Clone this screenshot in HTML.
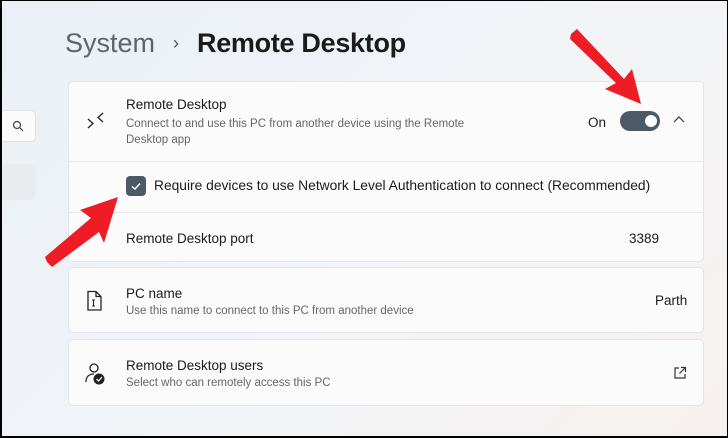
<!DOCTYPE html>
<html><head><style>
*{margin:0;padding:0;box-sizing:border-box}
body{width:728px;height:438px;overflow:hidden;font-family:"Liberation Sans",sans-serif;position:relative;background:linear-gradient(135deg,#eaf0f6 0%,#f2f4f7 55%,#f6f1ee 100%)}
.abs{position:absolute}
.card{position:absolute;left:68px;width:636px;background:#fbfbfc;border:1px solid #e3e5e8;border-radius:5px}
.t{font-size:13.5px;color:#1b1b1b}
.s{font-size:11.5px;color:#666;line-height:16px}
</style></head><body>
<div class="abs" style="left:65px;top:28px;font-size:27px;color:#606368">System</div>
<div class="abs" style="left:173px;top:33px;font-size:18px;color:#555">›</div>
<div class="abs" style="left:197px;top:28px;font-size:27px;color:#1b1b1b;font-weight:bold;letter-spacing:-0.3px">Remote Desktop</div>
<div class="abs" style="left:-4px;top:110px;width:40px;height:32px;background:#fbfbfc;border:1px solid #e0e2e5;border-radius:5px"></div>
<svg class="abs" style="left:12px;top:120px" width="12" height="12"><circle cx="5" cy="5" r="3.5" fill="none" stroke="#444" stroke-width="1.2"/><line x1="7.5" y1="7.5" x2="11" y2="11" stroke="#444" stroke-width="1.2"/></svg>
<div class="abs" style="left:-4px;top:164px;width:40px;height:36px;background:#e9ecef;border-radius:5px"></div>

<div class="card" style="top:81px;height:181px">
  <div style="position:absolute;left:0;right:0;top:79px;border-top:1px solid #e6e8eb"></div>
  <div style="position:absolute;left:0;right:0;top:130px;border-top:1px solid #e6e8eb"></div>
</div>
<svg class="abs" style="left:86px;top:110px" width="20" height="22"><path d="M2 9 L7 13.5 L2 18 M17 3 L12 7.5 L17 12" fill="none" stroke="#222" stroke-width="1.3"/></svg>
<div class="abs t" style="left:126px;top:97px">Remote Desktop</div>
<div class="abs s" style="left:126px;top:116px;width:380px">Connect to and use this PC from another device using the Remote Desktop app</div>
<div class="abs t" style="left:588px;top:115px">On</div>
<div class="abs" style="left:620px;top:111px;width:40px;height:20px;border-radius:10px;background:#4b5a66"></div>
<div class="abs" style="left:645px;top:115px;width:12px;height:12px;border-radius:6px;background:#fff"></div>
<svg class="abs" style="left:673px;top:115px" width="12" height="10"><path d="M1 7 L6 2 L11 7" fill="none" stroke="#333" stroke-width="1.2"/></svg>
<div class="abs" style="left:126px;top:176px;width:20px;height:20px;border-radius:4px;background:#4b5a66"></div>
<svg class="abs" style="left:126px;top:176px" width="20" height="20"><path d="M6 10.5 L9 13 L14 7.5" fill="none" stroke="#fff" stroke-width="1.4"/></svg>
<div class="abs t" style="left:154px;top:178px;font-size:13.8px">Require devices to use Network Level Authentication to connect (Recommended)</div>
<div class="abs t" style="left:126px;top:231px">Remote Desktop port</div>
<div class="abs t" style="left:629px;top:231px">3389</div>

<div class="card" style="top:267px;height:66px"></div>
<svg class="abs" style="left:86px;top:290px" width="18" height="22"><path d="M2 1.5 H10 L15 6.5 V20 H2 Z M10 1.5 V6.5 H15" fill="none" stroke="#222" stroke-width="1.3"/><path d="M6 10 H9 M7.5 10 V16 M6 16 H9" stroke="#222" stroke-width="1.1"/></svg>
<div class="abs t" style="left:126px;top:286px">PC name</div>
<div class="abs s" style="left:126px;top:303px">Use this name to connect to this PC from another device</div>
<div class="abs t" style="left:655px;top:293px">Parth</div>

<div class="card" style="top:339px;height:67px"></div>
<svg class="abs" style="left:84px;top:362px" width="24" height="24"><circle cx="10" cy="6" r="4" fill="none" stroke="#222" stroke-width="1.3"/><path d="M2 20 C2 14 6 12 10 12" fill="none" stroke="#222" stroke-width="1.3"/><circle cx="15" cy="17" r="5.5" fill="#222"/><path d="M12.5 17 L14.5 19 L18 15" fill="none" stroke="#fff" stroke-width="1.2"/></svg>
<div class="abs t" style="left:126px;top:358px">Remote Desktop users</div>
<div class="abs s" style="left:126px;top:375px">Select who can remotely access this PC</div>
<svg class="abs" style="left:673px;top:366px" width="14" height="14"><path d="M6 2 H2 V12 H12 V8 M8 1.5 H12.5 V6 M12.5 1.5 L6.5 7.5" fill="none" stroke="#333" stroke-width="1.2"/></svg>

<svg class="abs" style="left:0;top:0" width="728" height="438">
<g fill="#ee1c25">
<path d="M571 34 L577 29 L624 79 L632 69 L641 104 L605 89 L616 83 L570 39 Z"/>
<path d="M47 262 L52 267 L99 232 L104 243 L118 197 L80 210 L91 218 L45 257 Z"/>
</g>
</svg>
<div class="abs" style="left:0;top:0;width:728px;height:438px;border:2px solid #000;border-top-width:1px;border-right-width:1px;pointer-events:none"></div>
</body></html>
